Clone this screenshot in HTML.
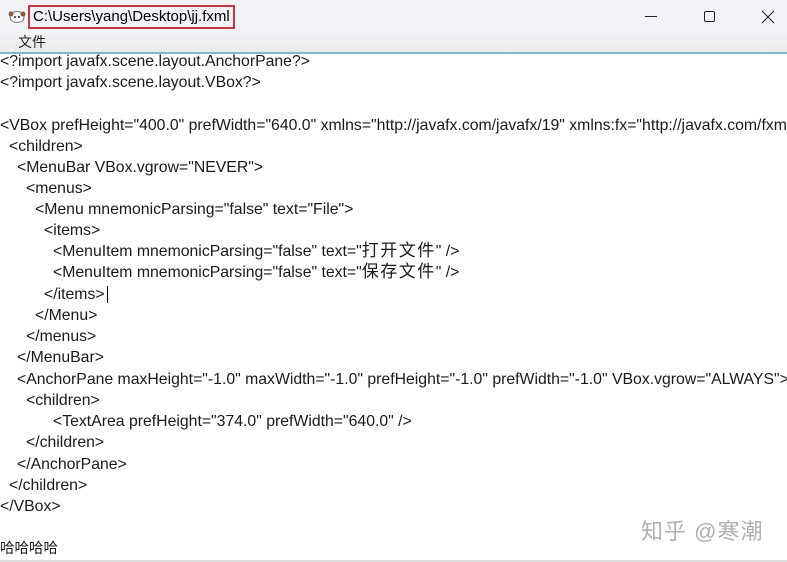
<!DOCTYPE html>
<html><head><meta charset="utf-8"><style>
body{margin:0;width:787px;height:562px;overflow:hidden;background:#fff;font-family:"Liberation Sans","Noto Sans CJK SC",sans-serif;position:relative}
.title{position:absolute;left:0;top:0;width:787px;height:52px;background:linear-gradient(#f2f3f8 0,#f2f3f8 30px,#ebebeb 52px)}
.bl{position:absolute;left:0;top:52px;width:787px;height:2px;background:#7bb7c9}
.path{position:absolute;left:28px;top:5px;width:207px;height:24px;border:2px solid #c8343f;box-sizing:border-box;font-size:15px;line-height:20px;padding-left:3px;color:#000}
.menu{position:absolute;left:18px;top:32px;font-size:14px;color:#222}
.ta{position:absolute;left:0;top:54px;width:787px;height:506px;overflow:hidden}
.l{position:absolute;white-space:pre;font-size:15.8px;color:#1a1a1a;line-height:20px}
.c{letter-spacing:1.5px;font-size:17px;line-height:16px}
.foot{position:absolute;left:0;top:560px;width:787px;height:2px;background:#ddd}
.wm{position:absolute;left:641px;top:514px;font-size:22px;color:#b0b0b0;letter-spacing:1px}
</style></head><body>
<div class="title"></div>
<svg style="position:absolute;left:8px;top:9px" width="18" height="14" viewBox="0 0 18 14"><ellipse cx="9" cy="8" rx="7" ry="5.5" fill="#fff" stroke="#777"/><circle cx="3" cy="5" r="2.5" fill="#8a5a3a"/><circle cx="15" cy="5" r="2.5" fill="#8a5a3a"/><circle cx="7" cy="8" r="1" fill="#333"/><circle cx="11" cy="8" r="1" fill="#333"/></svg>
<div class="path">C:\Users\yang\Desktop\jj.fxml</div>
<div class="menu">文件</div>
<svg style="position:absolute;left:640px;top:8px" width="140" height="18"><line x1="5" y1="8.5" x2="17" y2="8.5" stroke="#222"/><rect x="64.5" y="3.5" width="10" height="10" rx="1.5" fill="none" stroke="#222"/><path d="M122 3 L134 15 M134 3 L122 15" stroke="#222"/></svg>
<div class="bl"></div>
<div class="ta">
<div class="l" style="left:0;top:-2px">&lt;?import javafx.scene.layout.AnchorPane?&gt;</div>
<div class="l" style="left:0;top:19px">&lt;?import javafx.scene.layout.VBox?&gt;</div>
<div class="l" style="left:0;top:62px">&lt;VBox prefHeight="400.0" prefWidth="640.0" xmlns="http://javafx.com/javafx/19" xmlns:fx="http://javafx.com/fxml/1"&gt;</div>
<div class="l" style="left:9px;top:83px">&lt;children&gt;</div>
<div class="l" style="left:17px;top:104px">&lt;MenuBar VBox.vgrow="NEVER"&gt;</div>
<div class="l" style="left:26px;top:125px">&lt;menus&gt;</div>
<div class="l" style="left:35px;top:146px">&lt;Menu mnemonicParsing="false" text="File"&gt;</div>
<div class="l" style="left:44px;top:167px">&lt;items&gt;</div>
<div class="l" style="left:53px;top:188px">&lt;MenuItem mnemonicParsing="false" text="<span class="c">打开文件</span>" /&gt;</div>
<div class="l" style="left:53px;top:209px">&lt;MenuItem mnemonicParsing="false" text="<span class="c">保存文件</span>" /&gt;</div>
<div class="l" style="left:44px;top:231px">&lt;/items&gt;<span style="border-left:1px solid #000;margin-left:2px"></span></div>
<div class="l" style="left:35px;top:252px">&lt;/Menu&gt;</div>
<div class="l" style="left:26px;top:273px">&lt;/menus&gt;</div>
<div class="l" style="left:17px;top:294px">&lt;/MenuBar&gt;</div>
<div class="l" style="left:17px;top:316px">&lt;AnchorPane maxHeight="-1.0" maxWidth="-1.0" prefHeight="-1.0" prefWidth="-1.0" VBox.vgrow="ALWAYS"&gt;</div>
<div class="l" style="left:26px;top:337px">&lt;children&gt;</div>
<div class="l" style="left:53px;top:358px">&lt;TextArea prefHeight="374.0" prefWidth="640.0" /&gt;</div>
<div class="l" style="left:26px;top:379px">&lt;/children&gt;</div>
<div class="l" style="left:17px;top:401px">&lt;/AnchorPane&gt;</div>
<div class="l" style="left:9px;top:422px">&lt;/children&gt;</div>
<div class="l" style="left:0;top:443px">&lt;/VBox&gt;</div>
<div class="l" style="left:0;top:485px;font-size:14.5px">哈哈哈哈</div>
</div>
<div class="wm">知乎 @寒潮</div>
<div class="foot"></div>
</body></html>
